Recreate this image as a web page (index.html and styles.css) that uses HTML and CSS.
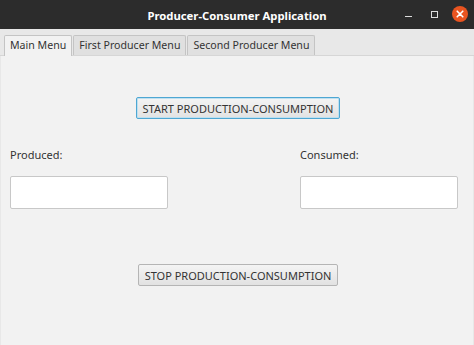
FILE: index.html
```html
<!doctype html>
<html>
<head>
<meta charset="utf-8">
<title>Producer-Consumer Application</title>
<link rel="stylesheet" href="styles.css">
</head>
<body>
<div class="window">
	<div class="titlebar">
		<span class="title">Producer-Consumer Application</span>
		<div class="controls">
			<span class="ctl min"></span>
			<span class="ctl max"></span>
			<span class="ctl close">
				<svg width="16" height="16" viewBox="0 0 16 16"><path d="M5.2 5.2 L10.8 10.8 M10.8 5.2 L5.2 10.8" stroke="#fff" stroke-width="1.6" stroke-linecap="round"/></svg>
			</span>
		</div>
	</div>
	<div class="tabs">
		<div class="tab active">Main Menu</div>
		<div class="tab">First Producer Menu</div>
		<div class="tab">Second Producer Menu</div>
	</div>
	<div class="panel">
		<div class="row-center">
			<button class="btn focus">START PRODUCTION-CONSUMPTION</button>
		</div>
		<div class="fields">
			<div class="field">
				<label>Produced:</label>
				<input type="text">
			</div>
			<div class="field">
				<label>Consumed:</label>
				<input type="text">
			</div>
		</div>
		<div class="row-center stop">
			<button class="btn">STOP PRODUCTION-CONSUMPTION</button>
		</div>
	</div>
</div>
</body>
</html>
```

FILE: styles.css
```css
html,body{
	margin: 0;
	padding: 0;
}
body{
	width: 474px;
	height: 345px;
	overflow: hidden;
	font-family: "Noto Sans", "DejaVu Sans", sans-serif;
	background: #f2f2f2;
}
.window{
	display: flex;
	flex-direction: column;
	height: 345px;
}
.titlebar{
	height: 29px;
	background: #2c2c2c;
	color: #fff;
	display: flex;
	align-items: center;
	justify-content: center;
	position: relative;
}
.title{
	font-weight: bold;
	font-size: 11.3px;
	padding-top: 1px;
}
.controls{
	position: absolute;
	right: 6px;
	top: 6px;
	display: flex;
	gap: 10px;
	align-items: center;
}
.ctl{
	width: 16px;
	height: 16px;
	display: flex;
	align-items: center;
	justify-content: center;
}
.min::before{
	content: "";
	width: 7px;
	height: 1px;
	margin-top: 4px;
	background: #ddd;
}
.max::before{
	content: "";
	width: 5px;
	height: 5px;
	border: 1px solid #ddd;
}
.close{
	border-radius: 50%;
	background: #e95420;
}
.tabs{
	background: #e8e8e8;
	height: 26px;
	display: flex;
	align-items: flex-end;
	padding-left: 4px;
	gap: 1px;
	border-bottom: 1px solid #d6d6d6;
}
.tab{
	font-size: 10.6px;
	color: #333;
	height: 19px;
	line-height: 19px;
	padding: 0 5px;
	background: #e0e0e0;
	border: 1px solid #c4c4c4;
	border-bottom: none;
	border-radius: 2px 2px 0 0;
}
.tab.active{
	background: #f2f2f2;
	height: 20px;
	margin-bottom: -1px;
}
.panel{
	flex: 1;
	background: #f2f2f2;
	display: flex;
	flex-direction: column;
	border-left: 1px solid #e8e8e8;
	border-right: 1px solid #e8e8e8;
}
.row-center{
	display: flex;
	justify-content: center;
	padding-top: 41px;
	padding-left: 2px;
}
.btn{
	font-family: "Noto Sans", "DejaVu Sans", sans-serif;
	font-size: 11px;
	color: #333;
	height: 22px;
	padding: 0 6px;
	background: linear-gradient(#f4f4f4, #e2e2e2);
	border: 1px solid #b5b5b5;
	border-radius: 2px;
}
.btn.focus{
	border-color: #4ea7d3;
	box-shadow: 0 0 0 1px #bfe0f0 inset;
}
.fields{
	display: flex;
	justify-content: space-between;
	padding: 28px 15px 0 9px;
}
.field{
	display: flex;
	flex-direction: column;
	width: 158px;
}
.field label{
	font-size: 11px;
	color: #333;
	height: 17px;
	margin-bottom: 12px;
}
.field input{
	box-sizing: border-box;
	height: 33px;
	width: 158px;
	border: 1px solid #c8c8c8;
	border-radius: 2px;
	background: #fff;
	margin: 0;
}
.stop{
	padding-top: 55px;
}
```
